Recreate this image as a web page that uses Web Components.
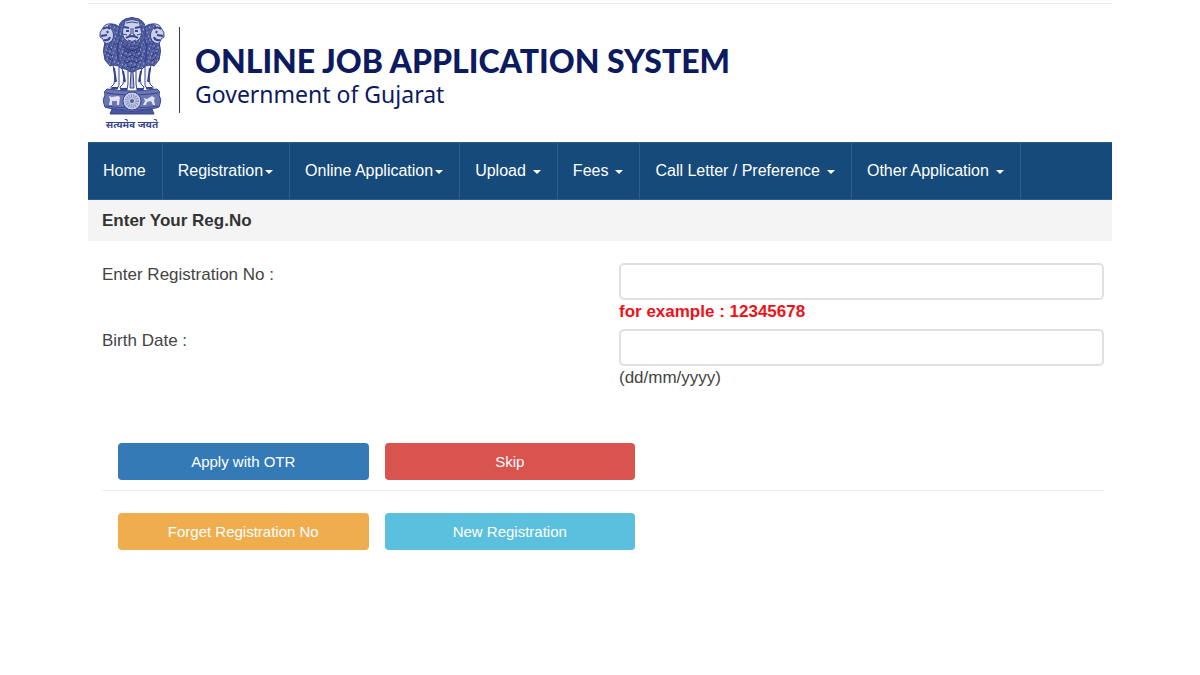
<!DOCTYPE html>
<html lang="en">
<head>
<meta charset="utf-8" />
<meta name="viewport" content="width=device-width, initial-scale=1" />
<title>Online Job Application System</title>
<style>
  body {
    margin: 0;
    background: white;
    color: #444;
    font: 17px/24px "Liberation Sans", Arial, sans-serif;
  }
</style>
</head>
<body>
<job-page>
  <site-header
    slot="header"
    heading="ONLINE JOB APPLICATION SYSTEM"
    tagline="Government of Gujarat"
  ></site-header>
  <nav-bar slot="nav">
    <nav-item>Home</nav-item>
    <nav-item menu="tight">Registration</nav-item>
    <nav-item menu="tight">Online Application</nav-item>
    <nav-item menu>Upload</nav-item>
    <nav-item menu>Fees</nav-item>
    <nav-item menu>Call Letter / Preference</nav-item>
    <nav-item menu>Other Application</nav-item>
  </nav-bar>
  <section-title>Enter Your Reg.No</section-title>
  <registration-form>
    <form-row label="Enter Registration No :" name="regno">
      <strong>for example : 12345678</strong>
    </form-row>
    <form-row label="Birth Date :" name="birthdate">(dd/mm/yyyy)</form-row>
    <action-button slot="primary" color="#337ab7">Apply with OTR</action-button>
    <action-button slot="primary" color="#d9534f">Skip</action-button>
    <action-button slot="secondary" color="#f0ad4e">Forget Registration No</action-button>
    <action-button slot="secondary" color="#5bc0de">New Registration</action-button>
  </registration-form>
</job-page>

<script>
const html = String.raw;

class BaseElement extends HTMLElement {
  constructor() {
    super();
    this.attachShadow({ mode: "open" });
  }

  connectedCallback() {
    this.shadowRoot.innerHTML = this.render();
  }
}

class JobPage extends BaseElement {
  render() {
    return html`
      <style>
        :host {
          display: block;
          padding: 3px 88px 0;
        }
      </style>
      <slot name="header"></slot>
      <slot name="nav"></slot>
      <main><slot></slot></main>
    `;
  }
}

class StateEmblem extends BaseElement {
  render() {
    return html`
      <style>
        :host {
          display: flex;
          flex-direction: column;
          align-items: center;
          width: 66px;
          color: #3a4688;
        }

        svg {
          display: block;
        }

        span {
          font: bold 10px/16px "Noto Sans", "Noto Sans Devanagari", sans-serif;
          white-space: nowrap;
        }
      </style>
      <svg width="66" height="100" viewBox="0 0 66 100" fill="none" stroke="#37448f" aria-hidden="true">
        <defs>
          <pattern id="curls" width="4" height="4" patternUnits="userSpaceOnUse" patternTransform="rotate(20)">
            <rect width="4" height="4" fill="#a9b1d6" />
            <path d="M0 1q2 0 2 2M3 0q1 1 1 3M1 4q1-1 3-1" stroke="#35418b" stroke-width="1" />
          </pattern>
        </defs>

        <!-- manes and chests -->
        <path fill="url(#curls)" stroke-width="1"
          d="M11 11Q17 9 22 14L44 14Q49 9 55 11Q60 17 60 26Q63 35 60 44L55 50L49 48L43 53L33 56L23 53L17 48L11 50L6 44Q3 35 6 26Q6 17 11 11Z" />
        <path stroke-width="2" d="M20 20Q17 32 20 46M46 20Q49 32 46 46M24 30Q33 39 42 30" />
        <path stroke-width="1" stroke="#26347e" d="M25 34l4 3 4-3 4 3 4-3M23 38l5 4 5-3 5 3 5-4M24 44l4 3 5-3 5 3 4-3M28 50l5 2 5-2M9 30l4 4M8 36l5 4M9 42l5 3M57 30l-4 4M58 36l-5 4M57 42l-5 3" />

        <!-- side heads -->
        <g id="side">
          <path fill="#c9cfe6" stroke-width="1" d="M13 8Q6 7 4 12Q0 16 1 21L4 23Q5 29 10 27L16 23L20 15Z" />
          <path fill="url(#curls)" stroke-width="1" d="M13 8Q20 8 22 15Q22 24 17 29L11 27Q16 22 14 16Q13 12 9 10Z" />
          <path stroke-width="2" d="M4 13q4-3 7 0M2 20l6-1M5 24q5 1 6-3M8 15l1 2" />
        </g>
        <use href="#side" transform="matrix(-1 0 0 1 66 0)" />

        <!-- centre head -->
        <path fill="url(#curls)" stroke-width="1" d="M26 3Q33 0 40 3Q47 7 46 13Q48 23 41 28Q33 33 25 28Q18 23 20 13Q19 7 26 3Z" />
        <path fill="#ccd2e8" stroke-width="1" d="M26 5Q33 2 40 5L42 13Q44 21 38 25Q33 28 28 25Q22 21 24 13Z" />
        <path stroke-width="2" d="M25 11l5 1M41 11l-5 1M27 15h3M36 15h3M27 22q6-4 12 0" />
        <path stroke-width="1" d="M32 12v6l-2 1 3 2 3-2-2-1v-6M27 7q6-2 12 0M29 24q4 3 8 0M24 18l4 1M42 18l-4 1" />

        <!-- legs -->
        <g id="legs" fill="#f5f6fb" stroke-width="1">
          <path d="M14 49L16 60L15 68L12 71L12 73H18L20 69L20 50Z" />
          <path d="M23 52L25 61L24 68L21 71L22 74H28L29 68L29 54Z" />
          <path stroke-width="2" d="M15 52l2 14M24 55l2 11M13 72h6M22 73h6" />
        </g>
        <use href="#legs" transform="matrix(-1 0 0 1 66 0)" />
        <path fill="#a9b1d6" d="M32 56h2l1 16h-4z" />

        <!-- abacus with the wheel -->
        <path fill="#6b77b1" stroke-width="1" d="M8 73Q33 77 58 73Q62 75 60 79Q63 84 61 88Q61 92 57 92Q33 96 9 92Q5 92 5 88Q3 84 6 79Q4 75 8 73Z" />
        <path stroke-width="1" d="M7 77Q33 81 59 77M7 90Q33 94 59 90" />
        <circle cx="33" cy="85" r="9" fill="#c9cfe6" stroke-width="1" />
        <circle cx="33" cy="85" r="5" stroke="#8590c0" stroke-width="4" stroke-dasharray="1 1" />
        <circle cx="33" cy="85" r="2" fill="#4f5c9f" stroke="none" />
        <path fill="#dfe3f1" stroke="none" d="M10 80l3 1 6-1 2 1-1 8h-2v-4h-5v4h-3l1-5z" />
        <path fill="#dfe3f1" stroke="none" d="M45 82l3 1 5-3 3 2-1 2 1 5h-2l-2-4-4 1-1 3h-3l2-4z" />
        <path fill="#4a579d" stroke-width="1" d="M13 93Q33 97 53 93L55 98H11Z" />
      </svg>
      <span lang="hi">सत्यमेव जयते</span>
    `;
  }
}

class SiteHeader extends BaseElement {
  render() {
    return html`
      <style>
        :host {
          display: flex;
          align-items: flex-start;
          gap: 14px;
          min-height: 126px;
          padding: 12px 11px 0;
          border-top: 1px solid #eee;
          color: #0c1a60;
        }

        div {
          margin-top: 11px;
          padding: 15px 0 5px 15px;
          border-left: 1px solid #333a5c;
        }

        h1,
        p {
          margin: 0;
          white-space: nowrap;
        }

        h1 {
          font: 900 32px/38px Lato, sans-serif;
        }

        p {
          font: 23px/28px "Noto Sans", "Open Sans", sans-serif;
        }
      </style>
      <state-emblem></state-emblem>
      <div>
        <h1>${this.getAttribute("heading")}</h1>
        <p>${this.getAttribute("tagline")}</p>
      </div>
    `;
  }
}

class NavBar extends BaseElement {
  render() {
    return html`
      <style>
        :host {
          display: block;
          border: 1px solid #2d5f8d;
          border-width: 1px 0;
          background: #154a7b;
        }

        nav {
          display: flex;
        }
      </style>
      <nav><slot></slot></nav>
    `;
  }
}

class NavItem extends BaseElement {
  render() {
    return html`
      <style>
        :host {
          display: block;
          border-right: 1px solid #2d5f8d;
        }

        a {
          display: flex;
          align-items: center;
          padding: 16px 16px 16px 15px;
          color: white;
          font-size: 16px;
          text-decoration: none;
          white-space: nowrap;
        }

        i {
          margin: 2px 0 0 7px;
          border: 4px solid transparent;
          border-top-color: white;
          border-bottom: 0;
        }

        :host([menu="tight"]) i {
          margin-left: 2px;
        }
      </style>
      <a href="#"><slot></slot>${this.hasAttribute("menu") ? "<i></i>" : ""}</a>
    `;
  }
}

class SectionTitle extends BaseElement {
  render() {
    return html`
      <style>
        :host {
          display: block;
          padding: 9px 14px 8px;
          background: #f4f4f4;
        }

        h2 {
          margin: 0;
          color: #333;
          font-size: 17px;
        }
      </style>
      <h2><slot></slot></h2>
    `;
  }
}

class FormRow extends BaseElement {
  render() {
    const name = this.getAttribute("name");
    return html`
      <style>
        :host {
          display: grid;
          grid-template-columns: 1fr 1fr;
          gap: 32px;
        }

        label {
          display: block;
        }

        input {
          display: block;
          box-sizing: border-box;
          width: 100%;
          height: 37px;
          padding: 6px 12px;
          border: 2px solid #e0e0e0;
          border-radius: 5px;
          background: white;
          font: inherit;
        }

        ::slotted(strong) {
          color: #f01018;
        }
      </style>
      <label for="${name}">${this.getAttribute("label")}</label>
      <div>
        <input id="${name}" name="${name}" type="text" aria-describedby="hint" />
        <div id="hint"><slot></slot></div>
      </div>
    `;
  }
}

class RegistrationForm extends BaseElement {
  render() {
    return html`
      <style>
        :host {
          display: block;
          padding: 22px 8px 22px 14px;
        }

        .rows {
          display: grid;
          gap: 5px;
        }

        .actions {
          display: grid;
          grid-template-columns: 1fr 1fr;
          gap: 16px;
          max-width: 517px;
          margin-left: 16px;
        }

        .primary {
          margin-top: 53px;
        }

        hr {
          margin: 10px 0 22px;
          border: 0;
          border-top: 1px solid #eee;
        }
      </style>
      <form>
        <div class="rows"><slot></slot></div>
        <div class="actions primary"><slot name="primary"></slot></div>
        <hr />
        <div class="actions"><slot name="secondary"></slot></div>
      </form>
    `;
  }
}

class ActionButton extends BaseElement {
  render() {
    return html`
      <style>
        :host {
          display: block;
        }

        button {
          width: 100%;
          height: 37px;
          border: 0;
          border-radius: 4px;
          background: ${this.getAttribute("color")};
          color: white;
          font: inherit;
          font-size: 15px;
          cursor: pointer;
        }
      </style>
      <button type="button"><slot></slot></button>
    `;
  }
}

customElements.define("job-page", JobPage);
customElements.define("state-emblem", StateEmblem);
customElements.define("site-header", SiteHeader);
customElements.define("nav-bar", NavBar);
customElements.define("nav-item", NavItem);
customElements.define("section-title", SectionTitle);
customElements.define("form-row", FormRow);
customElements.define("registration-form", RegistrationForm);
customElements.define("action-button", ActionButton);
</script>
</body>
</html>
